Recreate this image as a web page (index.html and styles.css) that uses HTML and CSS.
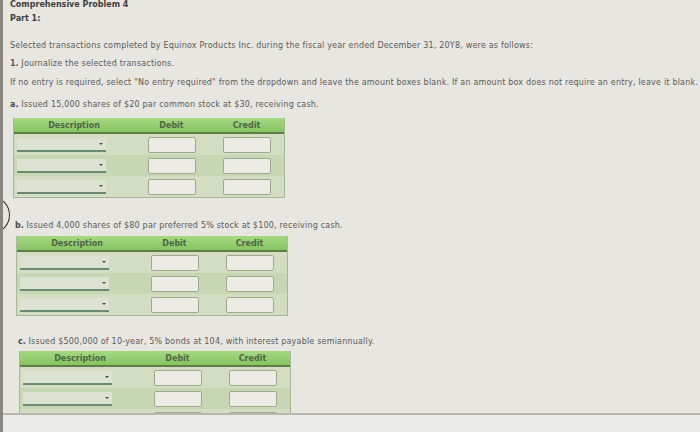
FILE: index.html
```html
<!DOCTYPE html>
<html>
<head>
<meta charset="utf-8">
<link rel="stylesheet" href="styles.css">
</head>
<body>
<div class="page">
  <div class="title">Comprehensive Problem 4</div>
  <div class="part">Part 1:</div>
  <p class="intro">Selected transactions completed by Equinox Products Inc. during the fiscal year ended December 31, 20Y8, were as follows:</p>
  <p class="step"><b>1.</b> Journalize the selected transactions.</p>
  <p class="note">If no entry is required, select "No entry required" from the dropdown and leave the amount boxes blank. If an amount box does not require an entry, leave it blank.</p>

  <section class="entry entry-a">
    <p class="q"><b>a.</b> Issued 15,000 shares of $20 par common stock at $30, receiving cash.</p>
    <div class="journal">
      <div class="head"><span>Description</span><span>Debit</span><span>Credit</span></div>
      <div class="row"><div class="cell"><span class="sel"></span></div><div class="cell c"><span class="amt"></span></div><div class="cell c"><span class="amt"></span></div></div>
      <div class="row alt"><div class="cell"><span class="sel"></span></div><div class="cell c"><span class="amt"></span></div><div class="cell c"><span class="amt"></span></div></div>
      <div class="row"><div class="cell"><span class="sel"></span></div><div class="cell c"><span class="amt"></span></div><div class="cell c"><span class="amt"></span></div></div>
    </div>
  </section>

  <section class="entry entry-b">
    <p class="q"><b>b.</b> Issued 4,000 shares of $80 par preferred 5% stock at $100, receiving cash.</p>
    <div class="journal">
      <div class="head"><span>Description</span><span>Debit</span><span>Credit</span></div>
      <div class="row"><div class="cell"><span class="sel"></span></div><div class="cell c"><span class="amt"></span></div><div class="cell c"><span class="amt"></span></div></div>
      <div class="row alt"><div class="cell"><span class="sel"></span></div><div class="cell c"><span class="amt"></span></div><div class="cell c"><span class="amt"></span></div></div>
      <div class="row"><div class="cell"><span class="sel"></span></div><div class="cell c"><span class="amt"></span></div><div class="cell c"><span class="amt"></span></div></div>
    </div>
  </section>

  <section class="entry entry-c">
    <p class="q"><b>c.</b> Issued $500,000 of 10-year, 5% bonds at 104, with interest payable semiannually.</p>
    <div class="journal">
      <div class="head"><span>Description</span><span>Debit</span><span>Credit</span></div>
      <div class="row"><div class="cell"><span class="sel"></span></div><div class="cell c"><span class="amt"></span></div><div class="cell c"><span class="amt"></span></div></div>
      <div class="row alt"><div class="cell"><span class="sel"></span></div><div class="cell c"><span class="amt"></span></div><div class="cell c"><span class="amt"></span></div></div>
      <div class="row"><div class="cell"><span class="sel"></span></div><div class="cell c"><span class="amt"></span></div><div class="cell c"><span class="amt"></span></div></div>
    </div>
  </section>
</div>
<div class="ring"></div>
<div class="bottombar"></div>
</body>
</html>
```
FILE: styles.css
```css
html, body {
  margin: 0;
  padding: 0;
}
body {
  width: 700px;
  height: 432px;
  overflow: hidden;
  background: #e7e6e1;
  border-left: 3px solid #8a857f;
  box-sizing: border-box;
  font-family: "DejaVu Sans", Verdana, sans-serif;
  font-size: 8px;
  color: #5b5b58;
  position: relative;
}
.page {
  padding-left: 7px;
}
p { margin: 0; line-height: 11px; letter-spacing: 0.2px; }
p b { letter-spacing: 0; }
.title {
  font-weight: bold;
  color: #3e3e3c;
  line-height: 11px;
  margin-top: -1px;
}
.part {
  font-weight: bold;
  color: #3e3e3c;
  line-height: 11px;
  margin-top: 3px;
}
.intro { margin-top: 16px; }
.step { margin-top: 7px; }
.note { margin-top: 8px; white-space: nowrap; }
.entry-a { margin-top: 11px; }
.entry-b { margin-top: 22px; padding-left: 5px; }
.entry-c { margin-top: 20px; padding-left: 8px; }
.q b { color: #4a4a48; }
.journal {
  margin-top: 8px;
  margin-left: 3px;
  width: 270px;
  border: 1px solid #a9b699;
  border-top: none;
  background: #cbd9b8;
}
.entry-b .journal { margin-top: 5px; margin-left: 1px; }
.entry-c .journal { margin-top: 4px; margin-left: 1px; }
.head, .row {
  display: grid;
  grid-template-columns: 120px 75px 75px;
}
.head {
  height: 16px;
  align-items: center;
  background: linear-gradient(#a6d884, #86c460);
  border-bottom: 2px solid #5e7d4a;
  box-sizing: border-box;
  font-weight: bold;
  color: #4d6645;
  text-align: center;
}
.row {
  height: 21px;
  align-items: center;
  background: #d2ddc2;
}
.row.alt { background: #c8d7b3; }
.cell.c { display: flex; justify-content: center; }
.sel {
  display: block;
  margin-left: 3px;
  width: 89px;
  height: 14px;
  box-sizing: border-box;
  background: #dde3d2;
  border-bottom: 2px solid #6b8a74;
  position: relative;
}
.sel::after {
  content: "";
  position: absolute;
  right: 3px;
  top: 5px;
  border-left: 2px solid transparent;
  border-right: 2px solid transparent;
  border-top: 2px solid #4a4a48;
}
.amt {
  display: block;
  width: 48px;
  height: 16px;
  box-sizing: border-box;
  background: #ecebe6;
  border: 1px solid #9ea98f;
  border-radius: 2px;
}
.ring {
  position: absolute;
  left: -27px;
  top: 197px;
  width: 32px;
  height: 34px;
  border: 1.5px solid #2f2f2f;
  border-radius: 50%;
}
.bottombar {
  position: absolute;
  left: 0;
  right: 0;
  bottom: 0;
  height: 17px;
  background: #ebebe7;
  border-top: 2px solid #b9b7b1;
}
```
